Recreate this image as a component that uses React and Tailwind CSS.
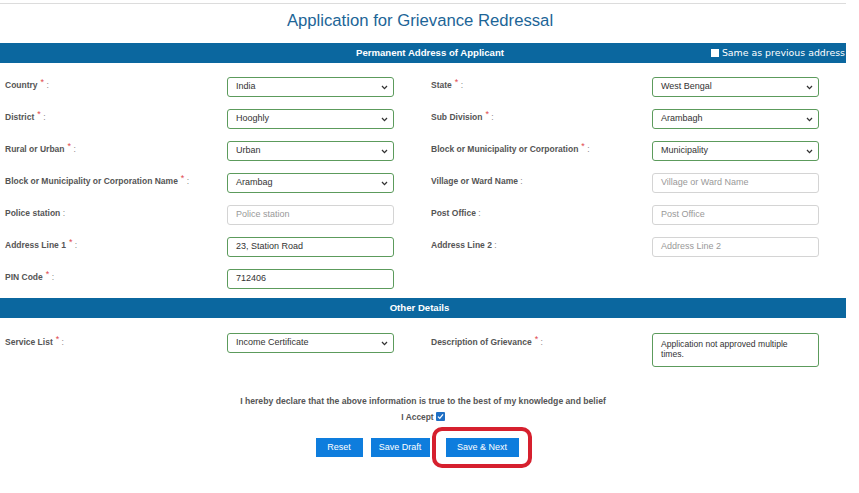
import React from "react";

const Chevron = () => (
  <svg width="7" height="5" viewBox="0 0 7 5" className="shrink-0">
    <polyline points="1,1 3.5,3.6 6,1" fill="none" stroke="#333" strokeWidth="1.3" />
  </svg>
);

const Label = ({ text, required }) => (
  <div className="text-[8.5px] font-bold text-[#555] leading-none -mt-[4px] pl-[5px]">
    {text}
    {required && <span className="relative -top-[3px] text-[#e0474c] text-[9px] ml-[3px] font-normal">*</span>}
    <span className="font-normal text-[#888]"> :</span>
  </div>
);

const Select = ({ value }) => (
  <div className="h-[20px] w-[167px] border border-[#5c9b5c] rounded-[3px] flex items-center justify-between pl-[8px] pr-[5px] text-[9px] text-[#333] bg-white">
    <span>{value}</span>
    <Chevron />
  </div>
);

const Input = ({ value, placeholder }) => (
  <div
    className={`h-[20px] w-[167px] border rounded-[3px] flex items-center pl-[8px] text-[9px] bg-white ${
      value ? "border-[#5c9b5c] text-[#333]" : "border-[#d4d4d4] text-[#999]"
    }`}
  >
    {value || placeholder}
  </div>
);

const Field = ({ f }) => {
  if (!f) return <><div /><div /></>;
  return (
    <>
      <Label text={f.label} required={f.required} />
      <div>{f.type === "select" ? <Select value={f.value} /> : <Input value={f.value} placeholder={f.placeholder} />}</div>
    </>
  );
};

const rows = [
  [
    { label: "Country", required: true, type: "select", value: "India" },
    { label: "State", required: true, type: "select", value: "West Bengal" },
  ],
  [
    { label: "District", required: true, type: "select", value: "Hooghly" },
    { label: "Sub Division", required: true, type: "select", value: "Arambagh" },
  ],
  [
    { label: "Rural or Urban", required: true, type: "select", value: "Urban" },
    { label: "Block or Municipality or Corporation", required: true, type: "select", value: "Municipality" },
  ],
  [
    { label: "Block or Municipality or Corporation Name", required: true, type: "select", value: "Arambag" },
    { label: "Village or Ward Name", placeholder: "Village or Ward Name" },
  ],
  [
    { label: "Police station", placeholder: "Police station" },
    { label: "Post Office", placeholder: "Post Office" },
  ],
  [
    { label: "Address Line 1", required: true, value: "23, Station Road" },
    { label: "Address Line 2", placeholder: "Address Line 2" },
  ],
  [{ label: "PIN Code", required: true, value: "712406" }, null],
];

const gridCols = "grid grid-cols-[227px_167px_32px_226px_167px] items-center";

export default function App() {
  return (
    <div className="w-[859px] h-[493px] bg-white font-['Liberation_Sans',Arial,sans-serif] overflow-hidden">
      <div className="w-[846px]">
        <div className="h-[3px]" />
        <div className="h-px bg-[#dcdcdc]" />
        <h1 className="h-[39px] flex items-center justify-center text-[16.7px] text-[#1d6597] pb-[6px] pr-[6px]">
          Application for Grievance Redressal
        </h1>

        <div className="h-[20px] bg-[#0b679f] flex items-center text-white relative">
          <div className="flex-1 text-center text-[9.6px] font-bold pl-[14px]">Permanent Address of Applicant</div>
          <div className="absolute right-[1px] top-0 h-full flex items-center gap-[3px] font-['DejaVu_Sans',sans-serif] text-[9.4px]">
            <span className="w-[8px] h-[8px] bg-white inline-block" />
            <span>Same as previous address</span>
          </div>
        </div>

        <div className="pt-[8px]">
          {rows.map((r, i) => (
            <div key={i} className={`${gridCols} h-[32px]`}>
              <Field f={r[0]} />
              <div />
              <Field f={r[1]} />
            </div>
          ))}
        </div>

        <div className="mt-[3px] h-[20px] bg-[#0b679f] flex items-center justify-center text-white text-[9.6px] font-bold pr-[7px]">
          Other Details
        </div>

        <div className={`${gridCols} items-start pt-[15px]`}>
          <div className="pt-[9px]">
            <Label text="Service List" required />
          </div>
          <Select value="Income Certificate" />
          <div />
          <div className="pt-[9px]">
            <Label text="Description of Grievance" required />
          </div>
          <div className="h-[34px] w-[167px] border border-[#5c9b5c] rounded-[3px] px-[8px] pt-[5px] text-[8.6px] leading-[10px] text-[#333]">
            Application not approved multiple times.
          </div>
        </div>

        <div className="mt-[30px] text-center text-[8.65px] font-bold text-[#555] leading-none">
          I hereby declare that the above information is true to the best of my knowledge and belief
        </div>
        <div className="mt-[5px] flex items-center justify-center gap-[2px] text-[8.4px] font-bold text-[#555]">
          <span>I Accept</span>
          <span className="w-[9px] h-[9px] bg-[#1f6fc4] rounded-[1px] flex items-center justify-center">
            <svg width="7" height="7" viewBox="0 0 7 7">
              <polyline points="1,3.6 2.8,5.4 6,1.4" fill="none" stroke="white" strokeWidth="1.3" />
            </svg>
          </span>
        </div>

        <div className="mt-[15px] flex justify-center gap-[8px] text-white text-[9px] pr-[12px]">
          <button className="h-[19px] w-[47px] bg-[#0e7ddd]">Reset</button>
          <button className="h-[19px] w-[59px] bg-[#0e7ddd]">Save Draft</button>
          <div className="relative ml-[8px]">
            <button className="h-[19px] w-[73px] bg-[#0e7ddd]">Save &amp; Next</button>
            <div className="absolute -left-[14px] -right-[13px] -top-[11px] -bottom-[11px] border-[4px] border-[#d6202e] rounded-[10px]" />
          </div>
        </div>
      </div>
    </div>
  );
}
